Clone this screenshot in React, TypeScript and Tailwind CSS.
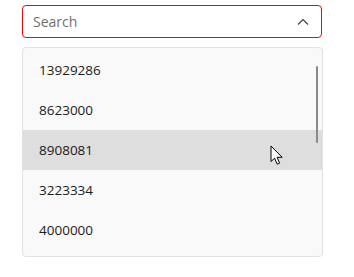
import { useState } from "react";

const OPTIONS = ["13929286", "8623000", "8908081", "3223334", "4000000"];

export default function App() {
  const [hovered, setHovered] = useState(2);

  return (
    <div
      className="relative h-[277px] w-[354px] bg-white"
      style={{ fontFamily: '"Open Sans", "Noto Sans", sans-serif' }}
    >
      <div className="pl-[22px] pt-[5px]">
        {/* Search box */}
        <div className="flex h-[33px] w-[300px] items-center rounded-[4px] border border-[#ff0000] bg-white pl-[10px] pr-[12px]">
          <input
            placeholder="Search"
            className="min-w-0 flex-1 bg-transparent text-[14px] text-[#1a1a1a] outline-none placeholder:text-[#707070]"
          />
          <svg width="12" height="8" viewBox="0 0 12 8" fill="none" className="mt-[1px]">
            <path d="M1 6.5L6 1.5L11 6.5" stroke="#404040" strokeWidth="1.2" />
          </svg>
        </div>

        {/* Dropdown list */}
        <div className="relative mt-[9px] h-[210px] w-[301px] overflow-hidden rounded-[4px] border border-[#e3e3e3] bg-[#f9f9f9] pt-[2px]">
          <ul>
            {OPTIONS.map((opt, i) => (
              <li
                key={opt}
                onMouseEnter={() => setHovered(i)}
                className={`flex h-[40px] items-center pl-[16px] text-[13.5px] text-[#1b1b1b] ${
                  hovered === i ? "bg-[#dedede]" : ""
                }`}
              >
                {opt}
              </li>
            ))}
          </ul>
          <div className="absolute right-[4px] top-[18px] h-[77px] w-[2px] rounded-full bg-[#8a8a8a]" />
        </div>
      </div>

      {/* Mouse pointer */}
      <svg
        className="pointer-events-none absolute left-[270px] top-[145px]"
        width="14"
        height="21"
        viewBox="0 0 14 21"
      >
        <path
          d="M1 1V16.5L4.6 13.2L7.2 19.2L9.6 18.2L7.1 12.3H12.2Z"
          fill="#ffffff"
          stroke="#000000"
          strokeWidth="1"
          strokeLinejoin="round"
        />
      </svg>
    </div>
  );
}
